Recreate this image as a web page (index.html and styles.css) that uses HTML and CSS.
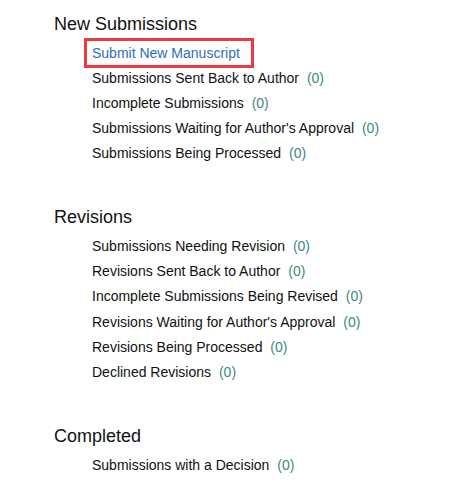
FILE: index.html
```html
<!DOCTYPE html>
<html lang="en">
<head>
  <meta charset="UTF-8">
  <meta name="viewport" content="width=device-width, initial-scale=1.0">
  <title>Author Dashboard</title>
  <link rel="stylesheet" href="styles.css">
</head>
<body>
  <div class="dashboard">
    <section class="queue">
      <h3>New Submissions</h3>
      <ul>
        <li><a href="#" class="highlight">Submit New Manuscript</a></li>
        <li>Submissions Sent Back to Author <span class="count">(0)</span></li>
        <li>Incomplete Submissions <span class="count">(0)</span></li>
        <li>Submissions Waiting for Author's Approval <span class="count">(0)</span></li>
        <li>Submissions Being Processed <span class="count">(0)</span></li>
      </ul>
    </section>

    <section class="queue">
      <h3>Revisions</h3>
      <ul>
        <li>Submissions Needing Revision <span class="count">(0)</span></li>
        <li>Revisions Sent Back to Author <span class="count">(0)</span></li>
        <li>Incomplete Submissions Being Revised <span class="count">(0)</span></li>
        <li>Revisions Waiting for Author's Approval <span class="count">(0)</span></li>
        <li>Revisions Being Processed <span class="count">(0)</span></li>
        <li>Declined Revisions <span class="count">(0)</span></li>
      </ul>
    </section>

    <section class="queue">
      <h3>Completed</h3>
      <ul>
        <li>Submissions with a Decision <span class="count">(0)</span></li>
      </ul>
    </section>
  </div>
</body>
</html>
```

FILE: styles.css
```css
body {
  font-family: "Liberation Sans", Arial, sans-serif;
  margin: 0;
  padding: 13px 0 0 54px;
  background-color: #ffffff;
  color: #111;
}

.queue {
  margin-bottom: 40px;
}

.queue:last-child {
  margin-bottom: 0;
}

.queue h3 {
  font-size: 18px;
  font-weight: normal;
  line-height: 22px;
  margin: 0 0 5.5px 0;
  color: #111;
}

.queue ul {
  list-style: none;
  margin: 0;
  padding: 0 0 0 38px;
}

.queue li {
  font-size: 14px;
  line-height: 25.2px;
  height: 25.2px;
}

.count {
  color: #3a8a7d;
  margin-left: 4px;
}

a {
  color: #2f6fb5;
  text-decoration: none;
}

/* rote Markierung um den ersten Link */
.highlight {
  display: inline-block;
  position: relative;
}

.highlight::after {
  content: "";
  position: absolute;
  left: -8px;
  right: -14px;
  top: -3px;
  bottom: -2px;
  border: 3px solid #ee3a3f;
}
```
